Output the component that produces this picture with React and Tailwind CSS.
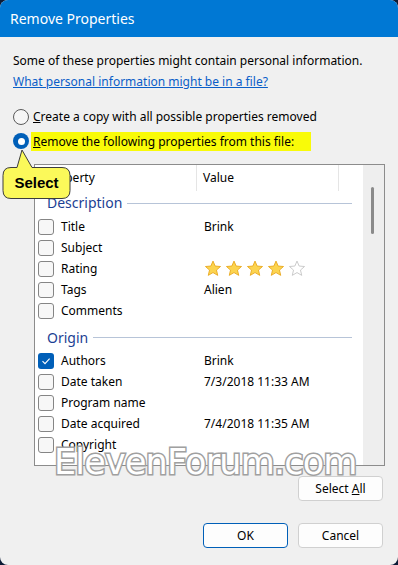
import React from 'react'

const ui = { fontFamily: '"Noto Sans", "Open Sans", sans-serif' }

const Checkbox = ({ checked }) =>
  checked ? (
    <span className="w-[16px] h-[16px] rounded-[3px] bg-[#005fb8] flex items-center justify-center shrink-0">
      <svg width="10" height="10" viewBox="0 0 10 10">
        <path d="M1.5 5.2 L4 7.6 L8.6 2.6" fill="none" stroke="#fff" strokeWidth="1.1" />
      </svg>
    </span>
  ) : (
    <span className="w-[16px] h-[16px] rounded-[3px] border border-[#858585] bg-[#f7f7f7] shrink-0" />
  )

const Star = ({ on }) => (
  <svg width="18" height="17" viewBox="0 0 24 23">
    <path
      d="M12 1.5 L14.9 8.2 L22.2 8.8 L16.7 13.6 L18.4 20.8 L12 17 L5.6 20.8 L7.3 13.6 L1.8 8.8 L9.1 8.2 Z"
      fill={on ? '#fcd44f' : '#ffffff'}
      stroke={on ? '#e8a71c' : '#c4c4c4'}
      strokeWidth="1.2"
      strokeLinejoin="round"
    />
  </svg>
)

const Row = ({ label, value, checked }) => (
  <div className="h-[21px] flex items-center pt-[2px]">
    <div className="w-[169px] flex items-center gap-[7px] pl-[3px]">
      <Checkbox checked={checked} />
      <span>{label}</span>
    </div>
    <div className="flex items-center">{value}</div>
  </div>
)

const Group = ({ title, line, className }) => (
  <div className={`flex items-center pl-[12px] pr-[11px] ${className}`}>
    <span className="text-[#1c3f94] text-[14px] leading-none">{title}</span>
    <span className={`flex-1 h-px bg-[#b7c4d8] ${line}`} />
  </div>
)

const Button = ({ children, primary }) => (
  <button
    className={`w-[85px] h-[25px] rounded-[4px] bg-[#fdfdfd] text-[12px] text-black ${
      primary ? 'border border-[#005fb8]' : 'border border-[#d0d0d0]'
    }`}
  >
    {children}
  </button>
)

export default function App() {
  return (
    <div className="w-[398px] h-[565px] bg-[#0c1b36] overflow-hidden" style={ui}>
      <div className="relative h-full rounded-[8px] overflow-hidden bg-[#f0f0f0] flex flex-col text-[12px] text-black">
        {/* title bar */}
        <div className="h-[37px] bg-[#0078d4] flex items-center px-[10px] text-white text-[14px] shrink-0">
          Remove Properties
        </div>

        <div className="px-[13px] pt-[15px] flex flex-col gap-[3px] leading-[18px]">
          <p>Some of these properties might contain personal information.</p>
          <a className="text-[#0a5ec8] underline w-fit">What personal information might be in a file?</a>
        </div>

        {/* radios */}
        <div className="mt-[16px] flex flex-col gap-[4px] pl-[13px]">
          <div className="h-[20px] flex items-center gap-[4px]">
            <span className="w-[16px] h-[16px] rounded-full border border-[#5a5a5a] bg-[#f6f6f6]" />
            <span>
              <span className="underline">C</span>reate a copy with all possible properties removed
            </span>
          </div>
          <div className="h-[20px] flex items-center gap-[2px]">
            <span className="w-[16px] h-[16px] rounded-full bg-[#005fb8] flex items-center justify-center">
              <span className="w-[7px] h-[7px] rounded-full bg-white" />
            </span>
            <span className="bg-[#f9fb08] pl-[2px] pr-[17px] leading-[19px]">
              <span className="underline">R</span>emove the following properties from this file:
            </span>
          </div>
        </div>

        {/* list */}
        <div className="mt-[13px] ml-[34px] w-[351px] h-[302px] border border-[#8c8c8c] flex shrink-0">
          <div className="flex-1 bg-white flex flex-col">
            <div className="h-[26px] flex items-stretch">
              <div className="w-[162px] pl-[11px] flex items-center border-r border-[#e5e5e5]">Property</div>
              <div className="w-[142px] pl-[6px] flex items-center border-r border-[#e5e5e5]">Value</div>
            </div>
            <Group title="Description" line="ml-[5px]" className="h-[24px]" />
            <Row label="Title" value="Brink" />
            <Row label="Subject" />
            <Row
              label="Rating"
              value={
                <div className="flex gap-[3px]">
                  <Star on />
                  <Star on />
                  <Star on />
                  <Star on />
                  <Star />
                </div>
              }
            />
            <Row label="Tags" value="Alien" />
            <Row label="Comments" />
            <Group title="Origin" line="ml-[5px] mt-[-1px]" className="h-[29px] pt-[6px]" />
            <Row label="Authors" value="Brink" checked />
            <Row label="Date taken" value="7/3/2018 11:33 AM" />
            <Row label="Program name" />
            <Row label="Date acquired" value="7/4/2018 11:35 AM" />
            <Row label="Copyright" />
          </div>
          <div className="w-[21px] bg-[#eeeeee] pl-[8px] pt-[22px]">
            <div className="w-[3px] h-[47px] rounded-full bg-[#8a8a8a]" />
          </div>
        </div>

        <div className="mt-[10px] flex justify-end pr-[15px]">
          <Button>
            Select <span className="underline">A</span>ll
          </Button>
        </div>
        <div className="mt-[22px] flex justify-end gap-[10px] pr-[15px]">
          <Button primary>OK</Button>
          <Button>Cancel</Button>
        </div>

        {/* watermark */}
        <div
          className="absolute left-[54px] top-[445px] text-[35px] leading-none tracking-[-0.8px] text-white [-webkit-text-stroke:3px_#a0a0a0] [paint-order:stroke_fill] pointer-events-none"
          style={{ fontFamily: '"DejaVu Sans", sans-serif' }}
        >
          ElevenForum.com
        </div>

        {/* callout */}
        <div className="absolute left-0 top-[148px] w-[75px] h-[54px]">
          <svg width="75" height="54" viewBox="0 0 75 54" className="absolute inset-0">
            <path
              d="M11 19.5 L17 19.5 L22 2 L32 19.5 L62 19.5 Q70 19.5 70 27.5 L70 42.5 Q70 50.5 62 50.5 L11 50.5 Q3 50.5 3 42.5 L3 27.5 Q3 19.5 11 19.5 Z"
              fill="#fbf95a"
              stroke="#3c3c3c"
              strokeWidth="1"
            />
          </svg>
          <div
            className="absolute left-[3px] top-[20px] w-[67px] h-[30px] flex items-center justify-center text-[15px] font-bold text-black"
            style={{ fontFamily: '"Liberation Sans", Arial, sans-serif' }}
          >
            Select
          </div>
        </div>
      </div>
    </div>
  )
}
